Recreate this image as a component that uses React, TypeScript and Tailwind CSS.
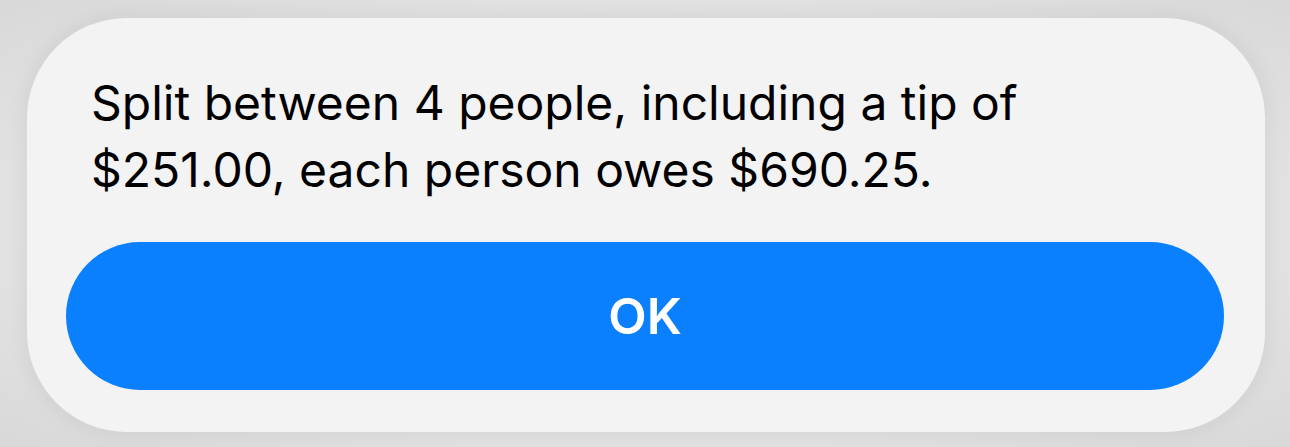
export default function App() {
  return (
    <div className="w-[1290px] h-[447px] overflow-hidden bg-[radial-gradient(ellipse_at_center,#ececec_0%,#e2e2e2_70%,#d8d8d8_100%)] pt-[18px] pl-[27px] pr-[25px] pb-[15px]">
      <div
        className="h-[414px] rounded-[100px] bg-[#f3f3f3] shadow-[0_0_24px_rgba(0,0,0,0.08)] pt-[51px] pb-[42px] flex flex-col"
        style={{ fontFamily: 'Inter, "Noto Sans", sans-serif' }}
      >
        <p className="pl-[64px] text-[48px] leading-[67px] text-black">
          Split between 4 people, including a tip of
          <br />
          $251.00, each person owes $690.25.
        </p>
        <button className="mt-auto ml-[39px] mr-[41px] h-[148px] rounded-full bg-[#0a80fe] text-white text-[50px] font-semibold">
          OK
        </button>
      </div>
    </div>
  );
}
